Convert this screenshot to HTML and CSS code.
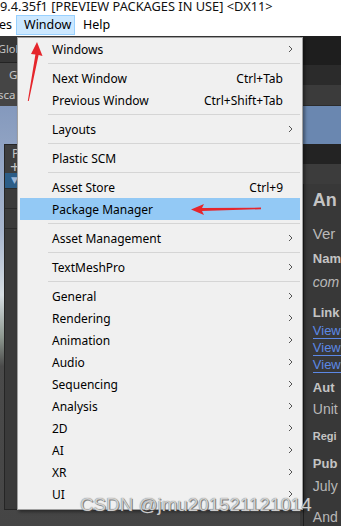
FILE: index.html
```html
<!DOCTYPE html>
<html lang="en">
<head>
  <meta charset="UTF-8">
  <title>Window menu</title>
  <link rel="stylesheet" href="styles.css">
</head>
<body>
  <div class="screen">
    <!-- Barra de título -->
    <div class="titlebar">9.4.35f1 [PREVIEW PACKAGES IN USE] &lt;DX11&gt;</div>

    <!-- Barra de menu -->
    <div class="menubar">
      <span class="mb-item mb-cut">es</span>
      <span class="mb-item active">Window</span>
      <span class="mb-item">Help</span>
    </div>

    <!-- Área do editor atrás do menu -->
    <div class="workspace">
      <div class="scene">
        <div class="tabbar">Glob</div>
        <div class="toolbar">
          <span>Ga</span>
          <span>sca</span>
        </div>
        <div class="view">
          <div class="pm-panel">
            <div class="pm-head">P</div>
            <div class="pm-plus">+</div>
            <div class="pm-row selected">&#9660;</div>
            <div class="pm-row"></div>
            <div class="pm-row"></div>
          </div>
        </div>
      </div>

      <div class="side">
        <div class="band b1"></div>
        <div class="band b2"></div>
        <div class="band b3"></div>
        <div class="band b4"></div>
        <div class="band b5"></div>
        <div class="band b6"></div>
        <div class="inspector">
          <div class="ins-title">An</div>
          <div class="ins-ver">Ver</div>
          <div class="ins-bold">Nam</div>
          <div class="ins-italic">com</div>
          <div class="ins-bold ins-gap">Link</div>
          <div class="ins-link first">View</div>
          <div class="ins-link">View</div>
          <div class="ins-link">View</div>
          <div class="ins-bold ins-gap2">Aut</div>
          <div class="ins-text">Unit</div>
          <div class="ins-small">Regi</div>
          <div class="ins-bold ins-gap3">Pub</div>
          <div class="ins-text ins-date">July</div>
          <div class="ins-text ins-gap4">And</div>
        </div>
      </div>
    </div>

    <!-- Menu Window aberto -->
    <div class="menu">
      <div class="item"><span class="label">Windows</span><span class="arrow"><svg width="5" height="8" viewBox="0 0 5 8"><path d="M1 1 L4 4 L1 7" fill="none" stroke="#555" stroke-width="1"/></svg></span></div>
      <div class="sep"></div>
      <div class="item"><span class="label">Next Window</span><span class="key">Ctrl+Tab</span><span class="arrow"></span></div>
      <div class="item"><span class="label">Previous Window</span><span class="key">Ctrl+Shift+Tab</span><span class="arrow"></span></div>
      <div class="sep"></div>
      <div class="item"><span class="label">Layouts</span><span class="arrow"><svg width="5" height="8" viewBox="0 0 5 8"><path d="M1 1 L4 4 L1 7" fill="none" stroke="#555" stroke-width="1"/></svg></span></div>
      <div class="sep"></div>
      <div class="item"><span class="label">Plastic SCM</span><span class="arrow"></span></div>
      <div class="sep"></div>
      <div class="item"><span class="label">Asset Store</span><span class="key">Ctrl+9</span><span class="arrow"></span></div>
      <div class="item hover"><span class="label">Package Manager</span><span class="arrow"></span></div>
      <div class="sep"></div>
      <div class="item"><span class="label">Asset Management</span><span class="arrow"><svg width="5" height="8" viewBox="0 0 5 8"><path d="M1 1 L4 4 L1 7" fill="none" stroke="#555" stroke-width="1"/></svg></span></div>
      <div class="sep"></div>
      <div class="item"><span class="label">TextMeshPro</span><span class="arrow"><svg width="5" height="8" viewBox="0 0 5 8"><path d="M1 1 L4 4 L1 7" fill="none" stroke="#555" stroke-width="1"/></svg></span></div>
      <div class="sep"></div>
      <div class="item"><span class="label">General</span><span class="arrow"><svg width="5" height="8" viewBox="0 0 5 8"><path d="M1 1 L4 4 L1 7" fill="none" stroke="#555" stroke-width="1"/></svg></span></div>
      <div class="item"><span class="label">Rendering</span><span class="arrow"><svg width="5" height="8" viewBox="0 0 5 8"><path d="M1 1 L4 4 L1 7" fill="none" stroke="#555" stroke-width="1"/></svg></span></div>
      <div class="item"><span class="label">Animation</span><span class="arrow"><svg width="5" height="8" viewBox="0 0 5 8"><path d="M1 1 L4 4 L1 7" fill="none" stroke="#555" stroke-width="1"/></svg></span></div>
      <div class="item"><span class="label">Audio</span><span class="arrow"><svg width="5" height="8" viewBox="0 0 5 8"><path d="M1 1 L4 4 L1 7" fill="none" stroke="#555" stroke-width="1"/></svg></span></div>
      <div class="item"><span class="label">Sequencing</span><span class="arrow"><svg width="5" height="8" viewBox="0 0 5 8"><path d="M1 1 L4 4 L1 7" fill="none" stroke="#555" stroke-width="1"/></svg></span></div>
      <div class="item"><span class="label">Analysis</span><span class="arrow"><svg width="5" height="8" viewBox="0 0 5 8"><path d="M1 1 L4 4 L1 7" fill="none" stroke="#555" stroke-width="1"/></svg></span></div>
      <div class="item"><span class="label">2D</span><span class="arrow"><svg width="5" height="8" viewBox="0 0 5 8"><path d="M1 1 L4 4 L1 7" fill="none" stroke="#555" stroke-width="1"/></svg></span></div>
      <div class="item"><span class="label">AI</span><span class="arrow"><svg width="5" height="8" viewBox="0 0 5 8"><path d="M1 1 L4 4 L1 7" fill="none" stroke="#555" stroke-width="1"/></svg></span></div>
      <div class="item"><span class="label">XR</span><span class="arrow"><svg width="5" height="8" viewBox="0 0 5 8"><path d="M1 1 L4 4 L1 7" fill="none" stroke="#555" stroke-width="1"/></svg></span></div>
      <div class="item"><span class="label">UI</span><span class="arrow"><svg width="5" height="8" viewBox="0 0 5 8"><path d="M1 1 L4 4 L1 7" fill="none" stroke="#555" stroke-width="1"/></svg></span></div>
    </div>

    <!-- Setas vermelhas da anotação -->
    <svg class="marks" width="341" height="526" viewBox="0 0 341 526">
      <polygon points="37,42 42.5,56 38.6,55 28.8,101 27.8,101 35.4,54.5 31,54" fill="#e5262c"/>
      <polygon points="191,209.5 204,204 202,208 261,207.6 261,209.2 202,211 204,215" fill="#e5262c"/>
    </svg>

    <!-- Marca d'água -->
    <div class="watermark">CSDN @jmu201521121014</div>
  </div>
</body>
</html>
```

FILE: styles.css
```css
/* Reset básico */
* {
  margin: 0;
  padding: 0;
  box-sizing: border-box;
}
html, body {
  height: 100%;
}
body {
  background: #383838;
  font-family: "Noto Sans", "DejaVu Sans", sans-serif;
}
/* Tela inteira */
.screen {
  position: relative;
  width: 341px;
  height: 526px;
  overflow: hidden;
  display: flex;
  flex-direction: column;
}
/* Barra de título */
.titlebar {
  height: 15px;
  background: #fff;
  color: #111;
  font-size: 12.8px;
  line-height: 13px;
  white-space: nowrap;
  overflow: hidden;
}
/* Barra de menu */
.menubar {
  height: 22px;
  background: #fff;
  display: flex;
  align-items: center;
  font-size: 12.5px;
  color: #000;
}
.mb-item {
  height: 20px;
  line-height: 18px;
  padding: 0 7px;
  border: 1px solid transparent;
}
.mb-cut {
  padding: 0;
  width: 18px;
  margin-left: -2px;
}
.mb-item.active {
  background: #cce8ff;
  border-color: #99d1ff;
  width: 59px;
}
/* Área do editor */
.workspace {
  flex: 1;
  display: flex;
  background: #3a3a3a;
}
.scene {
  width: 303px;
  display: flex;
  flex-direction: column;
}
.tabbar {
  height: 27px;
  background: #363636;
  border-bottom: 1px solid #232323;
  color: #c2c2c2;
  font-size: 11px;
  line-height: 26px;
  text-indent: -2px;
}
.toolbar {
  height: 43px;
  background: #454545;
  display: flex;
  flex-direction: column;
  justify-content: center;
  gap: 5px;
  color: #c8c8c8;
  font-size: 11.5px;
  line-height: 15px;
}
.toolbar span:first-child {
  padding-left: 9px;
}
.toolbar span:last-child {
  margin-left: -2px;
}
.view {
  flex: 1;
  background: linear-gradient(#8499bd 0%, #a9b7cf 30%, #d6dde2 45%, #8e9890 55%, #4a4a4a 62%, #454545 100%);
  display: flex;
  flex-direction: column;
}
.pm-panel {
  margin: 38px 0 16px 4px;
  flex: 1;
  background: #3a3a3a;
  border: 1px solid #252525;
  color: #c4c4c4;
  font-size: 12px;
}
.pm-head {
  height: 17px;
  line-height: 18px;
  padding-left: 7px;
  background: #3e3e3e;
}
.pm-plus {
  height: 11px;
  line-height: 10px;
  font-size: 17px;
  padding-left: 5px;
  background: #3e3e3e;
}
.pm-row {
  height: 18px;
  border-bottom: 1px solid #2a2a2a;
  background: #3b3b3b;
}
.pm-row + .pm-row {
  height: 20px;
}
.pm-row.selected {
  height: 16px;
  background: #2c5d87;
  color: #9fb8d8;
  font-size: 9px;
  line-height: 14px;
  padding-left: 6px;
}
/* Coluna direita (inspector) */
.side {
  flex: 1;
  display: flex;
  flex-direction: column;
}
.band {
  flex-shrink: 0;
}
.b1 { height: 29px; background: #1e1e1e; }
.b2 { height: 20px; background: #2b2b2b; }
.b3 { height: 21px; background: #3b3b3b; border-bottom: 1px solid #2c2c2c; }
.b4 { height: 38px; background: #6a87b0; }
.b5 { height: 20px; background: #232323; }
.b6 { height: 20px; background: #3c3c3c; }
.inspector {
  flex: 1;
  margin-left: 3px;
  border-left: 1px solid #1f1f1f;
  background: #383838;
  padding-left: 9px;
  color: #c4c4c4;
  font-family: "Liberation Sans", Arial, sans-serif;
  font-size: 13px;
  white-space: nowrap;
  overflow: hidden;
}
.ins-title {
  font-size: 18px;
  font-weight: bold;
  line-height: 22px;
  margin-top: 5px;
}
.ins-ver {
  font-size: 15px;
  line-height: 18px;
  margin-top: 14px;
  color: #b8b8b8;
}
.ins-bold {
  font-weight: bold;
  line-height: 16px;
  margin-top: 8px;
}
.ins-italic {
  font-style: italic;
  font-size: 14px;
  line-height: 18px;
  margin-top: 6px;
  color: #b8b8b8;
}
.ins-gap { margin-top: 14px; }
.ins-link {
  color: #5c88e6;
  font-size: 13px;
  line-height: 15px;
  border-bottom: 1px solid #5c88e6;
  margin-top: 1px;
}
.ins-link.first { margin-top: 2px; }
.ins-gap2 { margin-top: 7px; }
.ins-text {
  font-size: 14px;
  line-height: 18px;
  margin-top: 4px;
  color: #b8b8b8;
}
.ins-small {
  font-size: 11px;
  font-weight: bold;
  line-height: 14px;
  margin-top: 11px;
}
.ins-gap3 { margin-top: 13px; }
.ins-date { margin-top: 5px; }
.ins-gap4 { margin-top: 13px; }
/* Menu suspenso Window */
.menu {
  position: absolute;
  left: 17px;
  top: 37px;
  width: 286px;
  background: #f0f0f0;
  border: 1px solid #a0a0a0;
  padding: 0 2px 4px;
  box-shadow: 2px 2px 3px rgba(0, 0, 0, 0.4);
  font-size: 12px;
  color: #000;
  z-index: 10;
}
.item {
  height: 22px;
  display: flex;
  align-items: center;
  padding-left: 32px;
  white-space: nowrap;
}
.item.hover {
  background: #93c9f5;
}
.label {
  flex: 1;
}
.key {
  text-align: right;
}
.arrow {
  width: 17px;
  display: flex;
  align-items: center;
  padding-left: 5px;
}
.sep {
  height: 1px;
  margin: 3px 0 3px 28px;
  background: #d5d5d5;
}
/* Setas de anotação */
.marks {
  position: absolute;
  left: 0;
  top: 0;
  z-index: 20;
  pointer-events: none;
}
/* Marca d'água */
.watermark {
  position: absolute;
  left: 80px;
  top: 494px;
  z-index: 30;
  font-family: "Liberation Sans", Arial, sans-serif;
  font-size: 18.8px;
  color: rgba(228, 228, 228, 0.85);
  text-shadow: 0 0 1px #555, 1px 1px 0 rgba(70, 70, 70, 0.6);
  white-space: nowrap;
}
```
